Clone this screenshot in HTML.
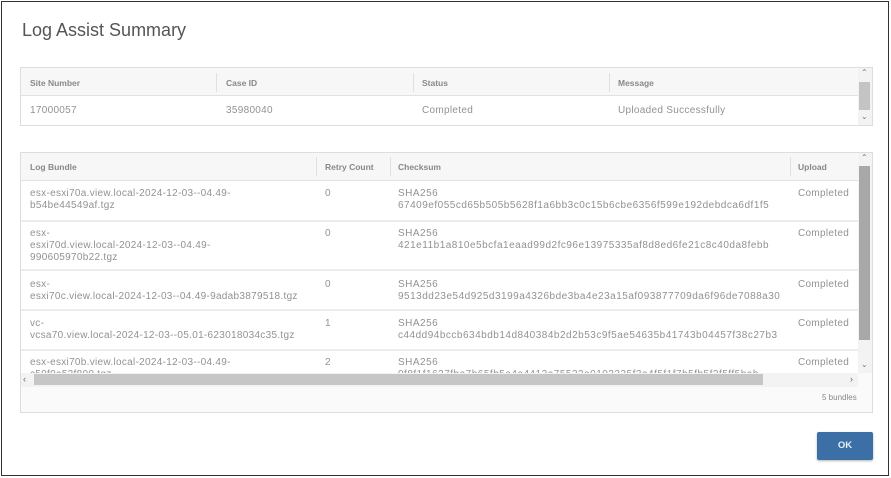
<!DOCTYPE html>
<html><head><meta charset="utf-8"><style>
*{margin:0;padding:0;box-sizing:border-box}
body{width:891px;height:478px;background:#fff;font-family:"Liberation Sans",sans-serif;color:#8a8a8a;position:relative;overflow:hidden}
.frame{position:absolute;left:1px;top:1px;width:888px;height:475px;border:1.5px solid #333}
.a{position:absolute}
.title{left:22px;top:20px;font-size:18px;color:#555}
.box{border:1px solid #ddd;background:#fff}
.hdr{background:#f7f7f7;border-bottom:1px solid #e2e2e2}
.h{font-size:8.5px;font-weight:bold;color:#888;position:absolute}
.sep{position:absolute;width:1px;background:#e0e0e0}
.t{font-size:10px;line-height:12px;position:absolute;color:#929292;white-space:nowrap;letter-spacing:0.3px}
.c{letter-spacing:0.5px}
.rl{position:absolute;height:2px;background:#ececec}
</style></head><body>
<div class="frame"></div>
<div class="a title">Log Assist Summary</div>

<!-- table 1 -->
<div class="a box" style="left:20px;top:67px;width:853px;height:59px"></div>
<div class="a hdr" style="left:21px;top:68px;width:837px;height:28px"></div>
<div class="h" style="left:30px;top:78px">Site Number</div>
<div class="h" style="left:226px;top:78px">Case ID</div>
<div class="h" style="left:422px;top:78px">Status</div>
<div class="h" style="left:618px;top:78px">Message</div>
<div class="sep" style="left:216px;top:73px;height:19px"></div>
<div class="sep" style="left:413px;top:73px;height:19px"></div>
<div class="sep" style="left:609px;top:73px;height:19px"></div>
<div class="t" style="left:30px;top:105px">17000057</div>
<div class="t" style="left:226px;top:105px">35980040</div>
<div class="t" style="left:422px;top:105px">Completed</div>
<div class="t" style="left:618px;top:105px">Uploaded Successfully</div>
<div class="a" style="left:858px;top:68px;width:14px;height:57px;background:#f3f3f3"></div>
<div class="a" style="left:859px;top:82px;width:11px;height:28px;background:#c4c4c4"></div>
<div class="a" style="left:861px;top:68px;font-size:8px;color:#777">&#8963;</div>
<div class="a" style="left:861px;top:112px;font-size:8px;color:#777">&#8964;</div>

<!-- table 2 -->
<div class="a box" style="left:20px;top:152px;width:853px;height:261px;background:#fafafa"></div>
<div class="a" style="left:21px;top:153px;width:837px;height:220px;background:#fff"></div>
<div class="a hdr" style="left:21px;top:153px;width:837px;height:28px"></div>
<div class="h" style="left:30px;top:162px">Log Bundle</div>
<div class="h" style="left:325px;top:162px">Retry Count</div>
<div class="h" style="left:398px;top:162px">Checksum</div>
<div class="h" style="left:798px;top:162px">Upload</div>
<div class="sep" style="left:316px;top:157px;height:19px"></div>
<div class="sep" style="left:390px;top:157px;height:19px"></div>
<div class="sep" style="left:790px;top:157px;height:19px"></div>

<div class="rl" style="left:21px;top:220px;width:837px"></div>
<div class="rl" style="left:21px;top:269px;width:837px"></div>
<div class="rl" style="left:21px;top:309px;width:837px"></div>
<div class="rl" style="left:21px;top:349px;width:837px"></div>

<div class="t" style="left:30px;top:188px">esx-esxi70a.view.local-2024-12-03--04.49-<br>b54be44549af.tgz</div>
<div class="t" style="left:325px;top:188px">0</div>
<div class="t c" style="left:398px;top:188px">SHA256<br>67409ef055cd65b505b5628f1a6bb3c0c15b6cbe6356f599e192debdca6df1f5</div>
<div class="t" style="left:798px;top:188px">Completed</div>

<div class="t" style="left:30px;top:228px">esx-<br>esxi70d.view.local-2024-12-03--04.49-<br>990605970b22.tgz</div>
<div class="t" style="left:325px;top:228px">0</div>
<div class="t c" style="left:398px;top:228px">SHA256<br>421e11b1a810e5bcfa1eaad99d2fc96e13975335af8d8ed6fe21c8c40da8febb</div>
<div class="t" style="left:798px;top:228px">Completed</div>

<div class="t" style="left:30px;top:279px">esx-<br>esxi70c.view.local-2024-12-03--04.49-9adab3879518.tgz</div>
<div class="t" style="left:325px;top:279px">0</div>
<div class="t c" style="left:398px;top:279px">SHA256<br>9513dd23e54d925d3199a4326bde3ba4e23a15af093877709da6f96de7088a30</div>
<div class="t" style="left:798px;top:279px">Completed</div>

<div class="t" style="left:30px;top:318px">vc-<br>vcsa70.view.local-2024-12-03--05.01-623018034c35.tgz</div>
<div class="t" style="left:325px;top:318px">1</div>
<div class="t c" style="left:398px;top:318px">SHA256<br>c44dd94bccb634bdb14d840384b2d2b53c9f5ae54635b41743b04457f38c27b3</div>
<div class="t" style="left:798px;top:318px">Completed</div>

<div class="a" style="left:21px;top:351px;width:837px;height:22px;overflow:hidden">
<div class="t" style="left:9px;top:6px">esx-esxi70b.view.local-2024-12-03--04.49-<br>c50f9a53f800.tgz</div>
<div class="t" style="left:304px;top:6px">2</div>
<div class="t c" style="left:377px;top:6px">SHA256<br>0f8f1f1637fba7b65fb5a4a4412a75533a0103335f3a4f5f1f7b5fb5f2f5ff5bab</div>
<div class="t" style="left:777px;top:6px">Completed</div>
</div>

<!-- h scrollbar -->
<div class="a" style="left:21px;top:373px;width:837px;height:14px;background:#f3f3f3"></div>
<div class="a" style="left:34px;top:374px;width:729px;height:11px;background:#c6c6c6"></div>
<div class="a" style="left:23px;top:374px;font-size:9px;color:#666">&#8249;</div>
<div class="a" style="left:850px;top:374px;font-size:9px;color:#666">&#8250;</div>
<!-- v scrollbar -->
<div class="a" style="left:858px;top:153px;width:14px;height:220px;background:#f3f3f3"></div>
<div class="a" style="left:859px;top:166px;width:11px;height:174px;background:#a8a8a8"></div>
<div class="a" style="left:861px;top:153px;font-size:8px;color:#777">&#8963;</div>
<div class="a" style="left:861px;top:360px;font-size:8px;color:#777">&#8964;</div>

<div class="a" style="left:822px;top:393px;font-size:8px;color:#888">5 bundles</div>

<div class="a" style="left:817px;top:432px;width:56px;height:28px;background:#3b6fa6;border-radius:2px;color:#e8eef5;font-size:9.5px;font-weight:bold;text-align:center;line-height:28px;box-shadow:0 1px 2px rgba(0,0,0,.3)">OK</div>
</body></html>
